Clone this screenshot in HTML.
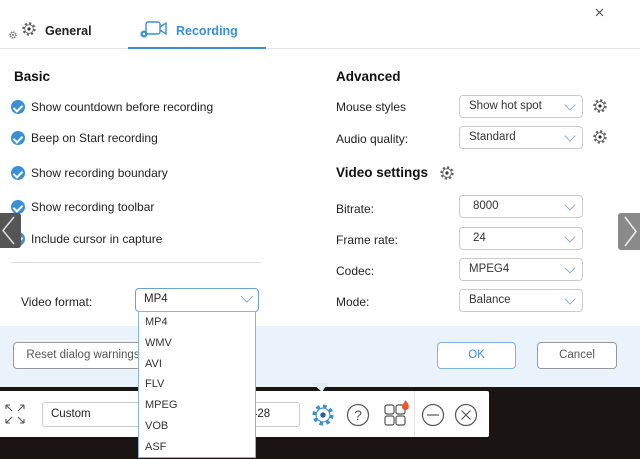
<!DOCTYPE html>
<html><head><meta charset="utf-8"><style>
*{box-sizing:border-box;margin:0;padding:0}
body{width:640px;height:459px;overflow:hidden;background:#fff;font-family:"Liberation Sans",sans-serif;color:#222;position:relative;font-size:12px}
.a{position:absolute}
.h{font-weight:bold;font-size:13.5px;color:#111}
.cb{position:absolute;left:11px;width:14px;height:14px;border-radius:50%;background:#3a8fd6}
.cb::after{content:"";position:absolute;left:4px;top:2.5px;width:4px;height:7px;border:solid #fff;border-width:0 2px 2px 0;transform:rotate(45deg)}
.lbl{position:absolute;left:31px;font-size:12px;color:#222}
.sel{position:absolute;left:459px;width:124px;height:23px;border:1px solid #ccc;border-radius:4px;font-size:11.5px;padding:4px 0 0 9px;color:#333}
.sel::after{content:"";position:absolute;right:8px;top:5px;width:7px;height:7px;border:solid #8aaed0;border-width:0 1px 1px 0;transform:rotate(45deg)}
.rl{position:absolute;left:336px;font-size:12px}
.btn{position:absolute;height:27px;border:1px solid #999;border-radius:4px;background:#fff;font-size:11.5px;color:#555;text-align:center;padding-top:6px}
.it{height:20.8px;padding-left:6px;font-size:11px;color:#333;padding-top:3px}
</style></head><body>
<svg width="0" height="0" style="position:absolute"><defs>
<g id="gear"><circle cx="0" cy="0" r="5.5" fill="none" stroke="#666" stroke-width="2.4" stroke-dasharray="2.2 2.1"/><circle cx="0" cy="0" r="4.3" fill="#fff" stroke="#666" stroke-width=".8"/><circle r="1.6" fill="#333"/></g>
</defs></svg>
<!-- tabs -->
<svg class="a" style="left:9px;top:20px" width="32" height="22"><g transform="translate(4,15) scale(.55)"><use href="#gear"/></g><g transform="translate(20,9)"><use href="#gear"/></g></svg>
<div class="a" style="left:45px;top:24px;font-weight:bold;font-size:12.5px">General</div>
<svg class="a" style="left:138px;top:19px" width="34" height="22"><rect x="8" y="3" width="14" height="12" rx="2" fill="none" stroke="#3a8fd6" stroke-width="1.4"/><path d="M22 8 L28 4 L28 15 L22 11" fill="none" stroke="#3a8fd6" stroke-width="1.4"/><circle cx="6" cy="15" r="3.5" fill="#3a8fd6"/><circle cx="6" cy="15" r="1.2" fill="#fff"/></svg>
<div class="a" style="left:176px;top:24px;font-weight:bold;font-size:12.5px;color:#3a8fd6">Recording</div>
<div class="a" style="left:0;top:48px;width:640px;height:1px;background:#e3e3e3"></div>
<div class="a" style="left:128px;top:47px;width:138px;height:2px;background:#3a8fd6"></div>
<svg class="a" style="left:595px;top:8px" width="9" height="9"><path d="M1 1 L8 8 M8 1 L1 8" stroke="#555" stroke-width="1.2"/></svg>
<!-- basic -->
<div class="a h" style="left:14px;top:69px">Basic</div>
<div class="cb" style="top:100px"></div><div class="lbl" style="top:100px">Show countdown before recording</div>
<div class="cb" style="top:131px"></div><div class="lbl" style="top:131px">Beep on Start recording</div>
<div class="cb" style="top:166px"></div><div class="lbl" style="top:166px">Show recording boundary</div>
<div class="cb" style="top:200px"></div><div class="lbl" style="top:200px">Show recording toolbar</div>
<div class="cb" style="top:232px"></div><div class="lbl" style="top:232px">Include cursor in capture</div>
<div class="a" style="left:0;top:213px;width:21px;height:35px;background:#555;border-radius:0 3px 3px 0"></div>
<svg class="a" style="left:0;top:213px" width="21" height="35"><path d="M14 4 L3 17.5 L14 31" fill="none" stroke="#ddd" stroke-width="1.5"/></svg>
<div class="a" style="left:11px;top:262px;width:250px;height:1px;background:#ddd"></div>
<div class="a" style="left:21px;top:295px">Video format:</div>
<div class="a" style="left:135px;top:288px;width:124px;height:24px;border:1px solid #6aa2d6;border-radius:4px;font-size:11.5px;padding:4px 0 0 8px">MP4</div>
<svg class="a" style="left:240px;top:294px" width="14" height="10"><path d="M1 2 L7 8 L13 2" fill="none" stroke="#8aaed0"/></svg>
<!-- advanced -->
<div class="a h" style="left:336px;top:69px">Advanced</div>
<div class="rl" style="top:100px">Mouse styles</div>
<div class="sel" style="top:95px">Show hot spot</div>
<svg class="a" style="left:591px;top:97px" width="18" height="18"><g transform="translate(9,9)"><use href="#gear"/></g></svg>
<div class="rl" style="top:132px">Audio quality:</div>
<div class="sel" style="top:126px">Standard</div>
<svg class="a" style="left:591px;top:128px" width="18" height="18"><g transform="translate(9,9)"><use href="#gear"/></g></svg>
<div class="a h" style="left:336px;top:165px">Video settings</div>
<svg class="a" style="left:438px;top:164px" width="18" height="18"><g transform="translate(9,9)"><use href="#gear"/></g></svg>
<div class="rl" style="top:202px">Bitrate:</div><div class="sel" style="top:195px;padding-left:13px">8000</div>
<div class="rl" style="top:233px">Frame rate:</div><div class="sel" style="top:227px;padding-left:13px">24</div>
<div class="rl" style="top:264px">Codec:</div><div class="sel" style="top:258px">MPEG4</div>
<div class="rl" style="top:295px">Mode:</div><div class="sel" style="top:289px">Balance</div>
<div class="a" style="left:618px;top:213px;width:22px;height:37px;background:#8a8a8a;border-radius:3px 0 0 3px"></div>
<svg class="a" style="left:618px;top:213px" width="22" height="37"><path d="M7 4 L18 18.5 L7 33" fill="none" stroke="#eee" stroke-width="1.5"/></svg>
<!-- footer -->
<div class="a" style="left:0;top:326px;width:640px;height:61px;background:#eaf3fb"></div>
<div class="btn" style="left:13px;top:342px;width:140px">Reset dialog warnings</div>
<div class="btn" style="left:437px;top:342px;width:79px;border-color:#7fb2e0;color:#3a8fd6">OK</div>
<div class="btn" style="left:537px;top:342px;width:80px">Cancel</div>
<!-- dark bottom -->
<div class="a" style="left:0;top:387px;width:640px;height:72px;background:#1a1412"></div>
<div class="a" style="left:0;top:391px;width:489px;height:46px;background:#fff;border-radius:0 2px 2px 0"></div>
<svg class="a" style="left:310px;top:383px" width="20" height="10"><path d="M2 0 L12 9 L18 0Z" fill="#dfeaf3"/></svg>
<svg class="a" style="left:4px;top:403px" width="22" height="22"><path d="M2 2 L8 8 M2 2 L2 6 M2 2 L6 2 M20 2 L14 8 M20 2 L16 2 M20 2 L20 6 M2 20 L8 14 M2 20 L2 16 M2 20 L6 20 M20 20 L14 14 M20 20 L16 20 M20 20 L20 16" stroke="#555" stroke-width="1.1" fill="none"/></svg>
<div class="a" style="left:42px;top:402px;width:100px;height:25px;border:1px solid #ccc;border-radius:3px;padding:5px 0 0 8px;font-size:11.5px">Custom</div>
<div class="a" style="left:240px;top:402px;width:60px;height:25px;border:1px solid #ccc;border-radius:3px;padding:5px 0 0 10px;font-size:11.5px">428</div>
<svg class="a" style="left:310px;top:402px" width="26" height="26"><g transform="translate(13,13) scale(1.6)"><circle r="5.5" fill="none" stroke="#3a8fd6" stroke-width="2.2" stroke-dasharray="2.2 2.1"/><circle r="4.3" fill="#fff" stroke="#3a8fd6" stroke-width=".7"/><circle r="1.7" fill="#1f63a8"/></g></svg>
<svg class="a" style="left:346px;top:403px" width="24" height="24"><circle cx="12" cy="12" r="10.5" fill="none" stroke="#555" stroke-width="1.2"/><text x="12" y="17" text-anchor="middle" font-size="14" fill="#555" font-family="Liberation Sans">?</text></svg>
<svg class="a" style="left:383px;top:398px" width="30" height="30"><g fill="none" stroke="#555" stroke-width="1.2"><rect x="2" y="7" width="9" height="9" rx="2"/><rect x="13" y="7" width="9" height="9" rx="2"/><rect x="2" y="18" width="9" height="9" rx="2"/><rect x="13" y="18" width="9" height="9" rx="2"/></g><path d="M22 2 C25 5 27 7 25 11 C23 13 19 12 19 9 C19 6 22 5 22 2Z" fill="#e53"/></svg>
<div class="a" style="left:414px;top:391px;width:1px;height:46px;background:#e5e5e5"></div>
<svg class="a" style="left:421px;top:403px" width="24" height="24"><circle cx="12" cy="12" r="10.5" fill="none" stroke="#555" stroke-width="1.2"/><path d="M6 12 H18" stroke="#555" stroke-width="1.2"/></svg>
<svg class="a" style="left:454px;top:403px" width="24" height="24"><circle cx="12" cy="12" r="10.5" fill="none" stroke="#555" stroke-width="1.2"/><path d="M7.5 7.5 L16.5 16.5 M16.5 7.5 L7.5 16.5" stroke="#555" stroke-width="1.2"/></svg>
<!-- dropdown list -->
<div class="a" style="left:138px;top:311px;width:118px;height:147px;background:#fff;border:1px solid #8ab4dc;padding-top:1px">
<div class="it">MP4</div><div class="it">WMV</div><div class="it">AVI</div><div class="it">FLV</div><div class="it">MPEG</div><div class="it">VOB</div><div class="it">ASF</div>
</div>
</body></html>
